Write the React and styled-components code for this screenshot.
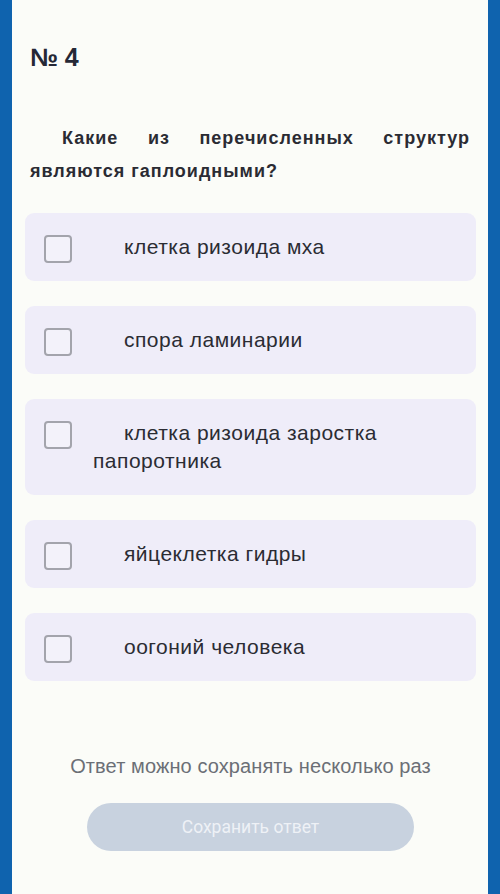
import styled, { createGlobalStyle } from 'styled-components';

const GlobalStyle = createGlobalStyle`
    html, body {
        margin: 0;
        padding: 0;
        background: #0f63ae;
    }
    * {
        box-sizing: border-box;
    }
`;

const options = [
    'клетка ризоида мха',
    'спора ламинарии',
    'клетка ризоида заростка папоротника',
    'яйцеклетка гидры',
    'оогоний человека',
];

const App = () => {
    return (
        <>
            <GlobalStyle />
            <Card>
                <Number>№ 4</Number>
                <Question>
                    Какие из перечисленных структур являются гаплоидными?
                </Question>
                <OptionList>
                    {options.map((text) => (
                        <Option key={text}>
                            <Checkbox />
                            <OptionText>{text}</OptionText>
                        </Option>
                    ))}
                </OptionList>
                <Footer>
                    <Hint>Ответ можно сохранять несколько раз</Hint>
                    <SaveButton disabled>Сохранить ответ</SaveButton>
                </Footer>
            </Card>
        </>
    );
};

const Card = styled.main`
    margin: 0 12px;
    min-height: 894px;
    padding: 42px 12px 40px 13px;
    background: #fbfcf8;
    font-family: 'Liberation Sans', Arial, sans-serif;
    color: #2a2b33;
`;

const Number = styled.h1`
    margin: 0 0 0 5px;
    font-size: 25px;
    line-height: 30px;
    font-weight: 700;
    color: #252836;
`;

const Question = styled.p`
    margin: 50px 6px 0 5px;
    font-size: 18px;
    line-height: 33px;
    font-weight: 700;
    letter-spacing: 1px;
    text-align: justify;
    text-indent: 32px;
    color: #2a2b33;
`;

const OptionList = styled.div`
    display: flex;
    flex-direction: column;
    gap: 25px;
    margin-top: 25px;
`;

const Option = styled.label`
    display: flex;
    align-items: flex-start;
    gap: 21px;
    padding: 20px 19px;
    border-radius: 9px;
    background: #efedf9;
    cursor: pointer;
`;

const Checkbox = styled.span`
    flex: none;
    width: 28px;
    height: 28px;
    margin: 2px 0 -2px;
    border: 2px solid #a3a4ac;
    border-radius: 4px;
    background: #f3f2fa;
`;

const OptionText = styled.span`
    flex: 1;
    font-size: 21px;
    line-height: 28px;
    letter-spacing: 0.5px;
    text-indent: 31px;
    color: #2b2c33;
`;

const Footer = styled.div`
    display: flex;
    flex-direction: column;
    align-items: center;
    margin-top: 72px;
`;

const Hint = styled.p`
    margin: 0;
    font-size: 20px;
    line-height: 26px;
    letter-spacing: 0.1px;
    color: #6b6f76;
`;

const SaveButton = styled.button`
    margin-top: 24px;
    width: 327px;
    height: 48px;
    border: none;
    border-radius: 24px;
    background: #c8d2df;
    color: #eef1f6;
    font-family: Roboto, 'Liberation Sans', sans-serif;
    font-size: 17.5px;
`;

export default App;
